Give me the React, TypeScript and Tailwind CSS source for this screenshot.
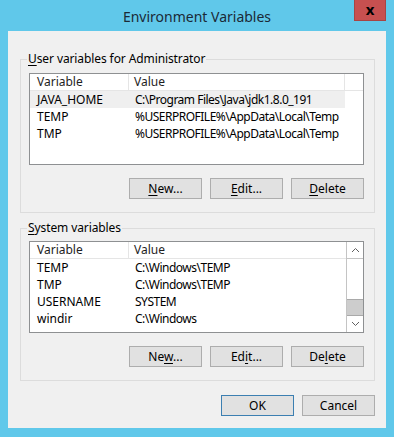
import React from "react";

type Row = [string, string];

const userRows: Row[] = [
  ["JAVA_HOME", "C:\\Program Files\\Java\\jdk1.8.0_191"],
  ["TEMP", "%USERPROFILE%\\AppData\\Local\\Temp"],
  ["TMP", "%USERPROFILE%\\AppData\\Local\\Temp"],
];

const systemRows: Row[] = [
  ["TEMP", "C:\\Windows\\TEMP"],
  ["TMP", "C:\\Windows\\TEMP"],
  ["USERNAME", "SYSTEM"],
  ["windir", "C:\\Windows"],
];

// underline the access key letter, like Windows does
function Key({ text, at }: { text: string; at: number }) {
  return (
    <>
      {text.slice(0, at)}
      <span className="underline underline-offset-[2px]">{text[at]}</span>
      {text.slice(at + 1)}
    </>
  );
}

function Btn({ children, primary }: { children: React.ReactNode; primary?: boolean }) {
  return (
    <button
      className={
        primary
          ? "h-[21px] w-[73px] border border-[#3c7fb1] bg-[#e1e1e1] text-[12px] leading-[19px] text-black"
          : "h-[21px] w-[73px] border border-[#adadad] bg-[#e1e1e1] text-[12px] leading-[19px] text-black"
      }
    >
      {children}
    </button>
  );
}

function Chevron({ up }: { up?: boolean }) {
  return (
    <svg width="9" height="6" viewBox="0 0 9 6" className="text-[#606060]">
      <path d={up ? "M1 5 L4.5 1.5 L8 5" : "M1 1 L4.5 4.5 L8 1"} fill="none" stroke="currentColor" strokeWidth="1" />
    </svg>
  );
}

function ScrollBar() {
  return (
    <div className="flex w-[17px] flex-col border-l border-[#c4c4c4] bg-white">
      <div className="flex h-[17px] items-center justify-center border-b border-[#c4c4c4]">
        <Chevron up />
      </div>
      <div className="flex-1" />
      <div className="h-[17px] border-y border-[#a9a9a9] bg-[#cdcdcd]" />
      <div className="flex h-[16px] items-center justify-center">
        <Chevron />
      </div>
    </div>
  );
}

function VarList({ rows, selected, scroll }: { rows: Row[]; selected?: number; scroll?: boolean }) {
  return (
    <div className="flex h-[92px] border border-[#8e9092] bg-white">
      <div className="min-w-0 flex-1 overflow-hidden">
        <div className="flex h-[17px] border-b border-[#e5e5e5] text-[#1e1e1e]">
          <div className="w-[99px] border-r border-[#e5e5e5] pl-[7px] leading-[16px]">Variable</div>
          <div className={scroll ? "flex-1 pl-[5px] leading-[16px]" : "w-[216px] border-r border-[#e5e5e5] pl-[5px] leading-[16px]"}>
            Value
          </div>
          {!scroll && <div className="flex-1" />}
        </div>
        {rows.map(([name, value], i) => (
          <div
            key={name}
            className={
              i === selected
                ? "flex h-[17px] w-[315px] bg-[#efefef] leading-[17px] text-black"
                : "flex h-[17px] leading-[17px] text-black"
            }
          >
            <div className="w-[99px] pl-[7px] whitespace-nowrap">{name}</div>
            <div className="pl-[6px] whitespace-nowrap tracking-[-0.5px]">{value}</div>
          </div>
        ))}
      </div>
      {scroll && <ScrollBar />}
    </div>
  );
}

function Group({
  label,
  rows,
  selected,
  scroll,
  keys,
  className,
}: {
  label: React.ReactNode;
  rows: Row[];
  selected?: number;
  scroll?: boolean;
  keys: [number, number, number];
  className: string;
}) {
  return (
    <fieldset className={`border border-[#dcdcdc] pl-[8px] pr-[10px] ${className}`}>
      <legend className="-ml-[2px] px-[1px] text-[12px] leading-[16px] tracking-[-0.1px] text-black">{label}</legend>
      <VarList rows={rows} selected={selected} scroll={scroll} />
      <div className="mt-[13px] flex justify-end gap-[8px]">
        <Btn>
          <Key text="New..." at={keys[0]} />
        </Btn>
        <Btn>
          <Key text="Edit..." at={keys[1]} />
        </Btn>
        <Btn>
          <Key text="Delete" at={keys[2]} />
        </Btn>
      </div>
    </fieldset>
  );
}

export default function App() {
  return (
    <div className="relative h-[437px] w-[394px] overflow-hidden bg-[#60c8ea] font-['Noto_Sans',sans-serif] text-[12px]">
      <div className="flex h-[31px] items-center justify-center pt-[1px] text-[14px] text-[#1b2a36]">
        Environment Variables
      </div>
      <div className="absolute right-[8px] top-0 flex h-[21px] w-[32px] items-center justify-center border border-t-0 border-[#a84444] bg-[#c75050] pb-[2px] text-[15px] font-bold leading-none text-black">
        x
      </div>

      <div className="mx-[8px] flex h-[397px] flex-col bg-[#f0f0f0] pl-[12px] pr-[11px]">
        <Group
          className="mt-[20px] pt-[6px] pb-[13px]"
          label={<Key text="User variables for Administrator" at={0} />}
          rows={userRows}
          selected={0}
          keys={[0, 0, 0]}
        />
        <Group
          className="mt-[7px] pt-[5px] pb-[13px]"
          label={<Key text="System variables" at={0} />}
          rows={systemRows}
          scroll
          keys={[2, 2, 2]}
        />
        <div className="mt-[14px] flex justify-end gap-[8px]">
          <Btn primary>OK</Btn>
          <Btn>Cancel</Btn>
        </div>
      </div>
    </div>
  );
}
